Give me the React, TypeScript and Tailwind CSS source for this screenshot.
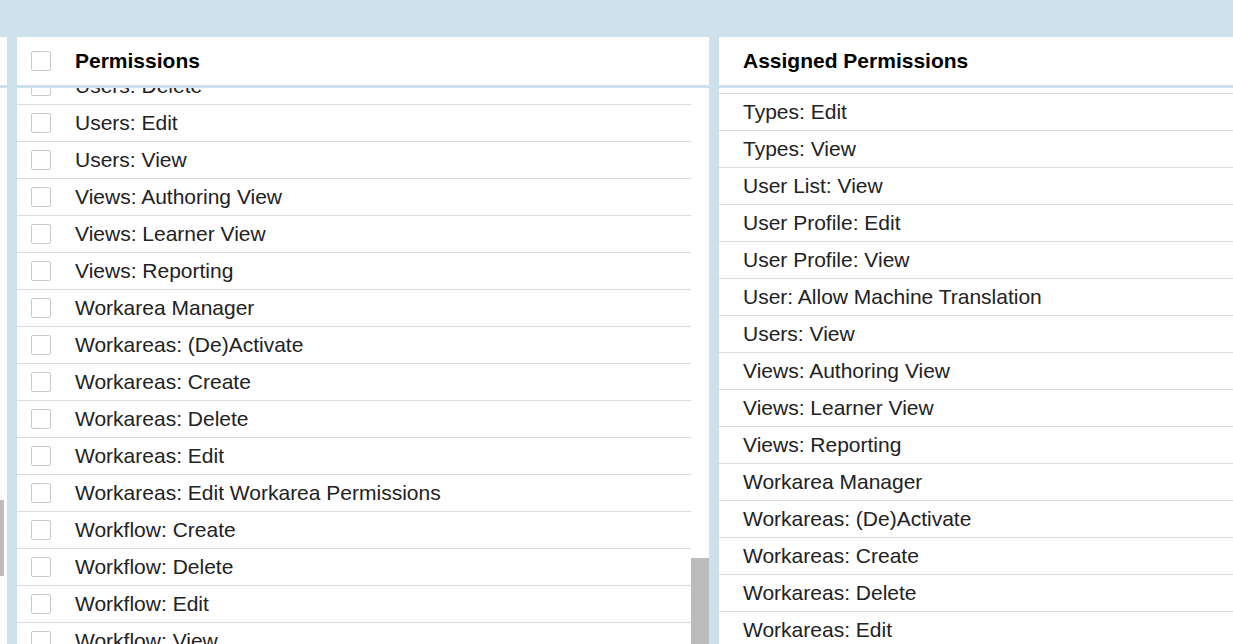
import React from 'react';

const available = [
  'Users: Delete',
  'Users: Edit',
  'Users: View',
  'Views: Authoring View',
  'Views: Learner View',
  'Views: Reporting',
  'Workarea Manager',
  'Workareas: (De)Activate',
  'Workareas: Create',
  'Workareas: Delete',
  'Workareas: Edit',
  'Workareas: Edit Workarea Permissions',
  'Workflow: Create',
  'Workflow: Delete',
  'Workflow: Edit',
  'Workflow: View',
];

const assigned = [
  'Types: Edit',
  'Types: View',
  'User List: View',
  'User Profile: Edit',
  'User Profile: View',
  'User: Allow Machine Translation',
  'Users: View',
  'Views: Authoring View',
  'Views: Learner View',
  'Views: Reporting',
  'Workarea Manager',
  'Workareas: (De)Activate',
  'Workareas: Create',
  'Workareas: Delete',
  'Workareas: Edit',
];

function Checkbox() {
  return <span className="inline-block h-[20px] w-[20px] shrink-0 rounded-[2px] border border-[#c9c9c9] bg-white" />;
}

export default function App() {
  return (
    <div
      className="flex h-[644px] w-[1233px] flex-col overflow-hidden bg-[#cde1ea] text-[#222]"
      style={{ fontFamily: '"Liberation Sans", Arial, sans-serif' }}
    >
      <div className="h-[37px] shrink-0" />
      <div className="flex min-h-0 flex-1">
        {/* edge of previous panel */}
        <div className="flex w-[7px] shrink-0 flex-col bg-white">
          <div className="h-[51px] shrink-0 border-b-[3px] border-[#cde1ea]" />
          <div className="mt-[412px] h-[76px] w-[4px] bg-[#bcbcbc]" />
        </div>
        <div className="w-[10px] shrink-0" />

        {/* available permissions */}
        <div className="flex w-[692px] shrink-0 flex-col bg-white">
          <div className="flex h-[51px] shrink-0 items-center border-b-[3px] border-[#cde1ea] pl-[14px]">
            <Checkbox />
            <span className="ml-[24px] text-[21px] font-bold text-black">Permissions</span>
          </div>
          <div className="flex min-h-0 flex-1">
            <div className="w-[674px] overflow-hidden">
              <div className="-mt-[20px]">
                {available.map((p) => (
                  <div key={p} className="flex h-[37px] items-center border-b border-[#dadada] pl-[14px]">
                    <Checkbox />
                    <span className="ml-[24px] text-[21px] whitespace-nowrap">{p}</span>
                  </div>
                ))}
              </div>
            </div>
            <div className="w-[18px] shrink-0">
              <div className="mt-[470px] h-[100px] bg-[#bcbcbc]" />
            </div>
          </div>
        </div>
        <div className="w-[10px] shrink-0" />

        {/* assigned permissions */}
        <div className="flex min-w-0 flex-1 flex-col bg-white">
          <div className="flex h-[51px] shrink-0 items-center border-b-[3px] border-[#cde1ea] pl-[24px]">
            <span className="text-[21px] font-bold text-black">Assigned Permissions</span>
          </div>
          <div className="min-h-0 flex-1 overflow-hidden">
            {/* tail of the row scrolled out of view */}
            <div className="h-[6px] border-b border-[#dadada]" />
            {assigned.map((p) => (
              <div key={p} className="flex h-[37px] items-center border-b border-[#dadada] pl-[24px]">
                <span className="text-[21px] whitespace-nowrap">{p}</span>
              </div>
            ))}
          </div>
        </div>
      </div>
    </div>
  );
}
